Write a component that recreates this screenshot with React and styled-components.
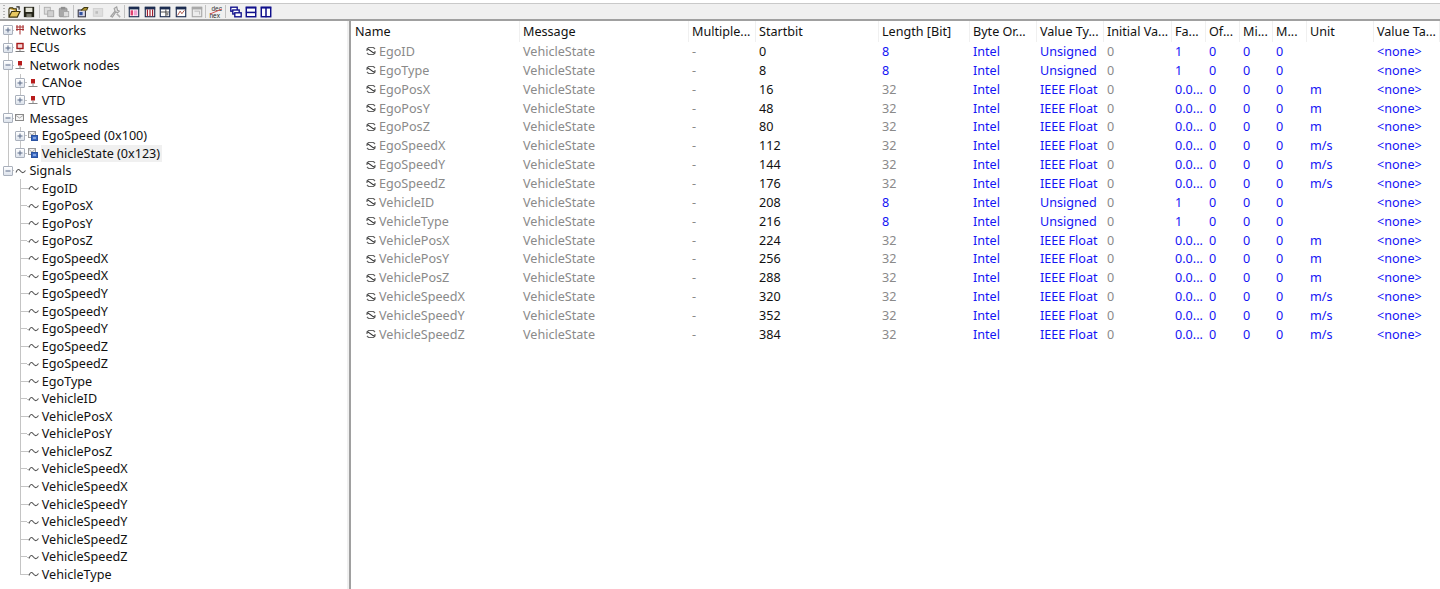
import React from "react";
import styled, { createGlobalStyle } from "styled-components";

const GlobalStyle = createGlobalStyle`
  html, body {
    margin: 0;
    padding: 0;
    height: 100%;
    overflow: hidden;
    background: #fff;
  }
  #root { height: 100%; }
`;

const Page = styled.div`
  width: 1440px;
  height: 589px;
  display: flex;
  flex-direction: column;
  font-family: "Noto Sans", "Open Sans", sans-serif;
  font-size: 12.6px;
  background: #fff;
  overflow: hidden;
`;

const TopEdge = styled.div`
  height: 3px;
  flex-shrink: 0;
  background: #fff;
  border-bottom: 1px solid #c9c9c9;
`;

const Toolbar = styled.div`
  height: 15px;
  flex-shrink: 0;
  display: flex;
  align-items: center;
  padding-left: 3px;
  background: #f0f0f0;
  border-bottom: 2px solid #a0a0a0;
`;

const Grip = styled.div`
  width: 2px;
  height: 13px;
  margin-right: 1px;
  background: repeating-linear-gradient(to bottom, #b5b5b5 0 1px, transparent 1px 3px);
`;

const ToolSlot = styled.span`
  width: 15px;
  height: 15px;
  margin-left: ${(p) => p.$gap || 0}px;
  flex-shrink: 0;
  display: flex;
  align-items: center;
  justify-content: center;
  svg { display: block; flex-shrink: 0; }
`;

const ToolSep = styled.span`
  width: 1px;
  height: 13px;
  margin-left: ${(p) => p.$gap || 0}px;
  flex-shrink: 0;
  background: #c2c2c2;
`;

const Body = styled.div`
  flex: 1;
  min-height: 0;
  display: flex;
`;

const TreePane = styled.div`
  width: 347px;
  flex-shrink: 0;
  padding-top: 0.5px;
  background: #fff;
`;

const Splitter = styled.div`
  width: 2px;
  flex-shrink: 0;
  background: #f0f0f0;
  border-right: 2px solid #a0a0a0;
`;

const TreeRow = styled.div`
  height: 17.55px;
  display: flex;
  align-items: center;
  padding-left: 2px;
  color: #111;
  line-height: 17px;
  white-space: nowrap;
`;

const lineColor = "#c4c4c4";
const slotBackgrounds = {
  none: "none",
  line: `linear-gradient(${lineColor}, ${lineColor}) 6px 0 / 1px 100% no-repeat`,
  tee: `linear-gradient(${lineColor}, ${lineColor}) 6px 0 / 1px 100% no-repeat, linear-gradient(${lineColor}, ${lineColor}) 6px 50% / 7px 1px no-repeat`,
  end: `linear-gradient(${lineColor}, ${lineColor}) 6px 0 / 1px 50% no-repeat, linear-gradient(${lineColor}, ${lineColor}) 6px 50% / 7px 1px no-repeat`,
  start: `linear-gradient(${lineColor}, ${lineColor}) 6px 100% / 1px 50% no-repeat, linear-gradient(${lineColor}, ${lineColor}) 6px 50% / 7px 1px no-repeat`,
};

const Slot = styled.span`
  width: 12.4px;
  height: 100%;
  flex-shrink: 0;
  display: flex;
  align-items: center;
  padding-left: 1px;
  box-sizing: border-box;
  background: ${(p) => slotBackgrounds[p.$kind]};
`;

const Expander = styled.span`
  width: 10px;
  height: 10px;
  box-sizing: border-box;
  border: 1px solid #a9b0bc;
  border-radius: 1px;
  background: linear-gradient(#fff, #dde3ec);
  display: flex;
  svg { display: block; }
`;

const TreeIcon = styled.span`
  width: 12px;
  height: 12px;
  flex-shrink: 0;
  margin-right: 2px;
  svg { display: block; }
`;

const TreeLabel = styled.span`
  padding: 0 2px 0 1px;
  background: ${(p) => (p.$selected ? "#f0f0f0" : "transparent")};
`;

const TablePane = styled.div`
  flex: 1;
  min-width: 0;
  padding-left: 1px;
`;

const columns = "168px 169px 67px 123px 91px 67px 67px 68px 34px 34px 33px 34px 67px 66px";

const TableRow = styled.div`
  display: grid;
  grid-template-columns: ${columns};
  height: ${(p) => (p.$header ? "21px" : "18.87px")};
  align-items: center;
  white-space: nowrap;
`;

const HeadCell = styled.div`
  height: 100%;
  display: flex;
  align-items: center;
  padding-left: 3px;
  box-sizing: border-box;
  color: #111;
  border-right: 1px solid #f0f0f0;
`;

const Cell = styled.div`
  padding-left: 3px;
  color: ${(p) => (p.$tone === "blue" ? "#1414f5" : p.$tone === "dark" ? "#111" : "#8a8a8a")};
`;

const NameCell = styled.div`
  display: flex;
  align-items: center;
  padding-left: 14px;
  color: #8a8a8a;
  svg { display: block; margin-right: 3px; flex-shrink: 0; }
`;

// toolbar drawings
const OpenIcon = () => (
  <svg width="13" height="12" viewBox="0 0 14 13">
    <path d="M1 3V12H10L13 6H4L1 12" fill="#e8c860" stroke="#3c3410" strokeWidth="1.2" />
    <path d="M1 3L2 2H5L6 3H9V6" fill="#d8b040" stroke="#3c3410" strokeWidth="1.2" />
    <path d="M9 1L12 1 12 4" fill="none" stroke="#222" strokeWidth="1.2" />
  </svg>
);
const SaveIcon = () => (
  <svg width="12" height="12" viewBox="0 0 14 14">
    <rect x="1" y="1" width="12" height="12" fill="#242418" />
    <rect x="3" y="2" width="8" height="5" fill="#e4e4d8" />
    <rect x="4" y="9" width="6" height="4" fill="#7c7c70" />
  </svg>
);
const CopyIcon = () => (
  <svg width="12" height="12" viewBox="0 0 14 14">
    <rect x="1.5" y="1.5" width="7" height="8" fill="#ddd" stroke="#aaa" />
    <rect x="5.5" y="5.5" width="7" height="7" fill="#cfcfcf" stroke="#a5a5a5" />
  </svg>
);
const PasteIcon = () => (
  <svg width="12" height="12" viewBox="0 0 14 14">
    <rect x="1.5" y="2.5" width="9" height="10" rx="1" fill="#a8a8a8" stroke="#8f8f8f" />
    <rect x="3.5" y="1" width="5" height="3" fill="#8f8f8f" />
    <rect x="6.5" y="6.5" width="6" height="6" fill="#ddd" stroke="#a5a5a5" />
  </svg>
);
const PropsIcon = () => (
  <svg width="12" height="12" viewBox="0 0 15 14">
    <rect x="1.5" y="4.5" width="9" height="8.5" fill="#d8d8e8" stroke="#303040" strokeWidth="1.3" />
    <rect x="3" y="7" width="4" height="4" fill="#3050a0" />
    <path d="M5 5L9 1.5 13.5 1.5 12 5" fill="#a89030" stroke="#403810" strokeWidth="1.3" />
  </svg>
);
const GreyBoxIcon = () => (
  <svg width="12" height="12" viewBox="0 0 14 14">
    <rect x="1.5" y="3" width="11" height="9" fill="#dedede" stroke="#cfcfcf" />
    <rect x="4" y="6" width="3" height="3" fill="#bdbdbd" />
  </svg>
);
const WrenchIcon = () => (
  <svg width="12" height="12" viewBox="0 0 14 14">
    <path d="M2 12L7 6 6 3 9 1 10 5 12 6 10 8 8 7 4 13Z" fill="#e0e0e0" stroke="#a0a0a0" strokeWidth="1.3" />
    <path d="M9 9L13 13" stroke="#b0b0b0" strokeWidth="1.8" />
  </svg>
);
const PanelIcon = ({ children, dim }) => (
  <svg width="12" height="12" viewBox="0 0 14 14">
    <rect x="1.5" y="1.5" width="11" height="11" fill={dim ? "#ececec" : "#fff"} stroke={dim ? "#a8a8a8" : "#1c2c50"} strokeWidth="1.3" />
    <rect x="1" y="1" width="12" height="3" fill={dim ? "#a8a8a8" : "#1c2c50"} />
    {children}
  </svg>
);
const DecHexIcon = () => (
  <svg width="14" height="14" viewBox="0 0 14 14">
    <text x="2.5" y="6" fontSize="6.5" fontFamily="Liberation Sans, sans-serif" fill="#333">dec</text>
    <text x="0.5" y="13" fontSize="6.5" fontFamily="Liberation Sans, sans-serif" fill="#222">hex</text>
    <path d="M1 9L13 4" stroke="#d04040" strokeWidth="0.9" />
  </svg>
);
const CascadeIcon = () => (
  <svg width="12" height="12" viewBox="0 0 15 14">
    <rect x="1" y="1" width="8" height="5" fill="#fff" stroke="#10108c" strokeWidth="1.7" />
    <rect x="3.5" y="4.5" width="8" height="5" fill="#fff" stroke="#10108c" strokeWidth="1.7" />
    <rect x="6" y="8" width="8" height="5" fill="#fff" stroke="#10108c" strokeWidth="1.7" />
  </svg>
);
const SplitHIcon = () => (
  <svg width="12" height="12" viewBox="0 0 14 14">
    <rect x="1.5" y="1.5" width="11" height="11" fill="#fff" stroke="#10108c" strokeWidth="1.7" />
    <rect x="1" y="1" width="12" height="2" fill="#10108c" />
    <path d="M1 7.5H13" stroke="#10108c" strokeWidth="1.8" />
  </svg>
);
const SplitVIcon = () => (
  <svg width="12" height="12" viewBox="0 0 14 14">
    <rect x="1.5" y="1.5" width="11" height="11" fill="#fff" stroke="#10108c" strokeWidth="1.7" />
    <rect x="1" y="1" width="12" height="2" fill="#10108c" />
    <path d="M7 2V13" stroke="#10108c" strokeWidth="1.8" />
  </svg>
);

// tree drawings
const PlusMinus = ({ open }) => (
  <svg width="8" height="8" viewBox="0 0 8 8">
    <path d="M1.5 4H6.5" stroke="#5a6a88" />
    {!open && <path d="M4 1.5V6.5" stroke="#5a6a88" />}
  </svg>
);
const NetworksIcon = () => (
  <svg width="12" height="12" viewBox="0 0 12 12">
    <path d="M2 3H10M2 5.5H10" stroke="#a83030" />
    <path d="M3 1V7M6 1V7M9 1V7M6 7V10.5" stroke="#a83030" />
  </svg>
);
const EcuIcon = () => (
  <svg width="12" height="12" viewBox="0 0 12 12">
    <rect x="3" y="1.5" width="6" height="5" fill="#f2d6d6" stroke="#a81818" strokeWidth="1.4" />
    <path d="M6 7V9" stroke="#888" />
    <path d="M1.5 9.5H10.5" stroke="#777" />
  </svg>
);
const NodeIcon = () => (
  <svg width="12" height="12" viewBox="0 0 12 12">
    <rect x="4" y="2" width="4" height="4.5" fill="#b81c1c" />
    <path d="M6 6.5V9" stroke="#888" />
    <path d="M1.5 9.5H10.5" stroke="#888" />
  </svg>
);
const EnvelopeIcon = () => (
  <svg width="12" height="12" viewBox="0 0 12 12">
    <rect x="1.5" y="2.5" width="8" height="6" fill="#f6f6f6" stroke="#8a8a8a" />
    <path d="M2 3.5L5.5 6 9 3.5" fill="none" stroke="#aaa" />
  </svg>
);
const MessageIcon = () => (
  <svg width="12" height="12" viewBox="0 0 12 12">
    <rect x="1.5" y="1.5" width="7" height="6" fill="#f4f4f4" stroke="#9a9a9a" />
    <path d="M2 2.5L5 5 8 2.5" fill="none" stroke="#a8a8a8" />
    <rect x="4.5" y="5.5" width="6" height="5" fill="#3a68c0" stroke="#2a52a0" />
    <path d="M6 8H9" stroke="#cfe0ff" />
  </svg>
);
const WaveIcon = ({ stub }) => (
  <svg width="12" height="12" viewBox="0 0 12 12">
    {stub && <path d="M0 6.5H2" stroke="#c4c4c4" />}
    <path d="M2 7.5C3.2 4.5 4.5 3.5 6 5.5S9 9 11.5 5.5" fill="none" stroke="#555" strokeWidth="1.1" />
  </svg>
);
const SignalLinkIcon = () => (
  <svg width="10" height="10" viewBox="0 0 10 10">
    <path d="M1 5V3L2.5 1.5H7.5L9 3" fill="none" stroke="#666" strokeWidth="1.2" />
    <path d="M9 5V7L7.5 8.5H2.5L1 7" fill="none" stroke="#666" strokeWidth="1.2" />
    <path d="M1 3C3.5 2.5 6 7.5 9 7" fill="none" stroke="#333" strokeWidth="1.2" />
  </svg>
);

const signals = [
  "EgoID", "EgoPosX", "EgoPosY", "EgoPosZ", "EgoSpeedX", "EgoSpeedX", "EgoSpeedY", "EgoSpeedY",
  "EgoSpeedY", "EgoSpeedZ", "EgoSpeedZ", "EgoType", "VehicleID", "VehiclePosX", "VehiclePosY",
  "VehiclePosZ", "VehicleSpeedX", "VehicleSpeedX", "VehicleSpeedY", "VehicleSpeedY",
  "VehicleSpeedZ", "VehicleSpeedZ", "VehicleType",
];

const headers = [
  "Name", "Message", "Multiple...", "Startbit", "Length [Bit]", "Byte Or...", "Value Ty...",
  "Initial Va...", "Fa...", "Of...", "Mi...", "M...", "Unit", "Value Ta...",
];

const F = "IEEE Float";
const U = "Unsigned";
const rows = [
  ["EgoID", 0, 8, U, 1, ""],
  ["EgoType", 8, 8, U, 1, ""],
  ["EgoPosX", 16, 32, F, "0.0...", "m"],
  ["EgoPosY", 48, 32, F, "0.0...", "m"],
  ["EgoPosZ", 80, 32, F, "0.0...", "m"],
  ["EgoSpeedX", 112, 32, F, "0.0...", "m/s"],
  ["EgoSpeedY", 144, 32, F, "0.0...", "m/s"],
  ["EgoSpeedZ", 176, 32, F, "0.0...", "m/s"],
  ["VehicleID", 208, 8, U, 1, ""],
  ["VehicleType", 216, 8, U, 1, ""],
  ["VehiclePosX", 224, 32, F, "0.0...", "m"],
  ["VehiclePosY", 256, 32, F, "0.0...", "m"],
  ["VehiclePosZ", 288, 32, F, "0.0...", "m"],
  ["VehicleSpeedX", 320, 32, F, "0.0...", "m/s"],
  ["VehicleSpeedY", 352, 32, F, "0.0...", "m/s"],
  ["VehicleSpeedZ", 384, 32, F, "0.0...", "m/s"],
];

function Branch({ kind, open, icon, label, selected, parent }) {
  return (
    <TreeRow>
      {parent && <Slot $kind="line" />}
      <Slot $kind={kind}>
        {open !== undefined && (
          <Expander>
            <PlusMinus open={open} />
          </Expander>
        )}
      </Slot>
      <TreeIcon>{icon}</TreeIcon>
      <TreeLabel $selected={selected}>{label}</TreeLabel>
    </TreeRow>
  );
}

function SignalLeaf({ label, last }) {
  return (
    <TreeRow>
      <Slot $kind="none" />
      <Slot $kind={last ? "end" : "tee"} />
      <TreeIcon>
        <WaveIcon stub />
      </TreeIcon>
      <TreeLabel>{label}</TreeLabel>
    </TreeRow>
  );
}

export default function App() {
  return (
    <Page>
      <GlobalStyle />
      <TopEdge />
      <Toolbar>
        <Grip />
        <ToolSlot $gap={0.5}><OpenIcon /></ToolSlot>
        <ToolSlot><SaveIcon /></ToolSlot>
        <ToolSep $gap={2.5} />
        <ToolSlot $gap={1.5}><CopyIcon /></ToolSlot>
        <ToolSlot><PasteIcon /></ToolSlot>
        <ToolSep $gap={1.5} />
        <ToolSlot $gap={1.5}><PropsIcon /></ToolSlot>
        <ToolSlot><GreyBoxIcon /></ToolSlot>
        <ToolSlot $gap={2}><WrenchIcon /></ToolSlot>
        <ToolSep $gap={1.5} />
        <ToolSlot $gap={1.5}>
          <PanelIcon><rect x="3" y="5" width="3" height="6" fill="#e04070" /><rect x="7" y="5" width="4" height="6" fill="#f0a0d0" /></PanelIcon>
        </ToolSlot>
        <ToolSlot $gap={1}>
          <PanelIcon><path d="M4 4V12M7 4V12M10 4V12" stroke="#a02030" strokeWidth="1.4" /></PanelIcon>
        </ToolSlot>
        <ToolSlot>
          <PanelIcon><path d="M2 7H12M8 4V12" stroke="#333" /><rect x="8" y="8" width="3" height="3" fill="#888" /></PanelIcon>
        </ToolSlot>
        <ToolSlot $gap={1}>
          <PanelIcon><path d="M3 11L6 6 8 9 11 5" fill="none" stroke="#a04030" /></PanelIcon>
        </ToolSlot>
        <ToolSlot $gap={1}>
          <PanelIcon dim><path d="M4 6H10V10" fill="none" stroke="#b5b5b5" /></PanelIcon>
        </ToolSlot>
        <ToolSep $gap={0.5} />
        <ToolSlot $gap={2}><DecHexIcon /></ToolSlot>
        <ToolSep $gap={2} />
        <ToolSlot $gap={2}><CascadeIcon /></ToolSlot>
        <ToolSlot $gap={0.5}><SplitHIcon /></ToolSlot>
        <ToolSlot><SplitVIcon /></ToolSlot>
      </Toolbar>
      <Body>
        <TreePane>
          <Branch kind="start" open={false} icon={<NetworksIcon />} label="Networks" />
          <Branch kind="tee" open={false} icon={<EcuIcon />} label="ECUs" />
          <Branch kind="tee" open={true} icon={<NodeIcon />} label="Network nodes" />
          <Branch parent kind="tee" open={false} icon={<NodeIcon />} label="CANoe" />
          <Branch parent kind="end" open={false} icon={<NodeIcon />} label="VTD" />
          <Branch kind="tee" open={true} icon={<EnvelopeIcon />} label="Messages" />
          <Branch parent kind="tee" open={false} icon={<MessageIcon />} label="EgoSpeed (0x100)" />
          <Branch parent kind="end" open={false} icon={<MessageIcon />} label="VehicleState (0x123)" selected />
          <Branch kind="end" open={true} icon={<WaveIcon />} label="Signals" />
          {signals.map((s, i) => (
            <SignalLeaf key={i} label={s} last={i === signals.length - 1} />
          ))}
        </TreePane>
        <Splitter />
        <TablePane>
          <TableRow $header>
            {headers.map((h) => (
              <HeadCell key={h}>{h}</HeadCell>
            ))}
          </TableRow>
          {rows.map(([name, start, len, type, factor, unit]) => (
            <TableRow key={name}>
              <NameCell>
                <SignalLinkIcon />
                {name}
              </NameCell>
              <Cell>VehicleState</Cell>
              <Cell>-</Cell>
              <Cell $tone="dark">{start}</Cell>
              <Cell $tone={len === 8 ? "blue" : "grey"}>{len}</Cell>
              <Cell $tone="blue">Intel</Cell>
              <Cell $tone="blue">{type}</Cell>
              <Cell>0</Cell>
              <Cell $tone="blue">{factor}</Cell>
              <Cell $tone="blue">0</Cell>
              <Cell $tone="blue">0</Cell>
              <Cell $tone="blue">0</Cell>
              <Cell $tone="blue">{unit}</Cell>
              <Cell $tone="blue">{"<none>"}</Cell>
            </TableRow>
          ))}
        </TablePane>
      </Body>
    </Page>
  );
}
